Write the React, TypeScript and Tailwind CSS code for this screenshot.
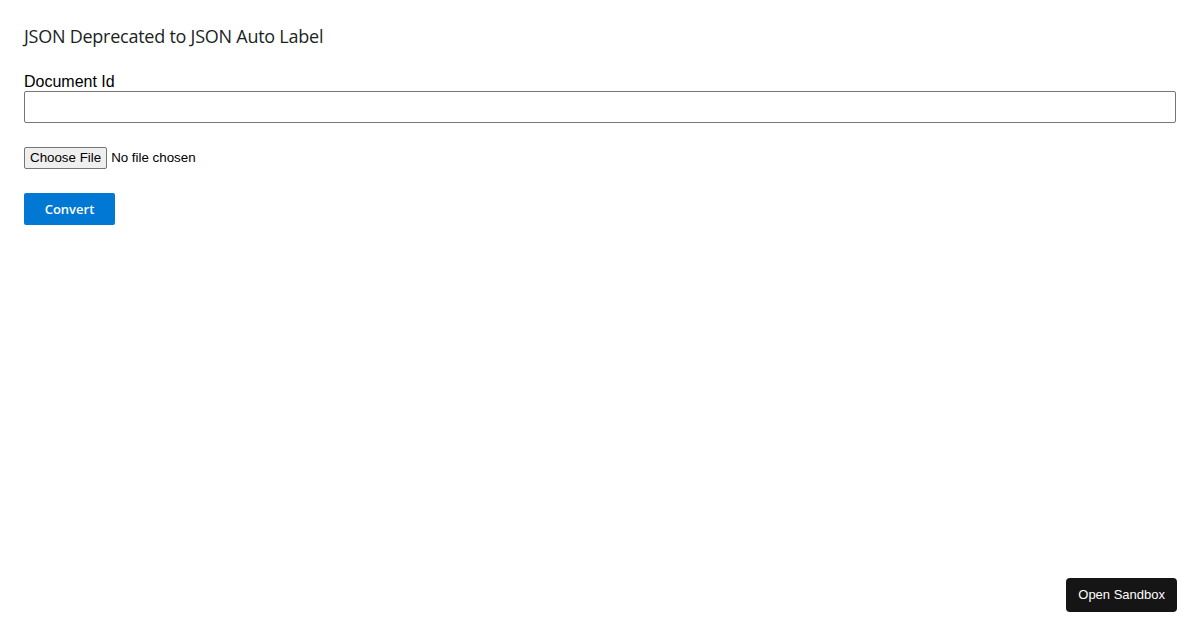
export default function App() {
  return (
    <div className="min-h-screen bg-white p-6 font-['Open_Sans',sans-serif] text-[#201f1e]">
      <h1 className="text-[18px] leading-[24px] font-normal tracking-[-0.25px] text-[#201f1e]">
        JSON Deprecated to JSON Auto Label
      </h1>
      <div className="mt-6 flex flex-col">
        <label
          htmlFor="docId"
          className="font-['Liberation_Sans',Arial,sans-serif] text-[16px] leading-[19px] text-black"
        >
          Document Id
        </label>
        <input
          id="docId"
          type="text"
          className="h-8 w-full rounded-[2px] border border-[#767676] bg-white px-2 outline-none"
        />
      </div>
      <div className="mt-6 flex h-[22px] items-center">
        <input
          type="file"
          className="font-['Liberation_Sans',Arial,sans-serif] text-[13.33px] leading-[16px] text-black file:mr-[4px] file:h-[22px] file:rounded-[2px] file:border file:border-[#767676] file:bg-[#efefef] file:px-[5px] file:text-black"
        />
      </div>
      <button className="mt-6 h-8 w-[91px] rounded-[2px] bg-[#0078d4] pt-[1px] text-[13px] font-semibold text-white">
        Convert
      </button>
      <button className="fixed right-[23px] bottom-[18px] h-[34px] rounded-[4px] bg-[#151515] px-[12px] font-['Liberation_Sans',Arial,sans-serif] text-[13px] text-white">
        Open Sandbox
      </button>
    </div>
  );
}
